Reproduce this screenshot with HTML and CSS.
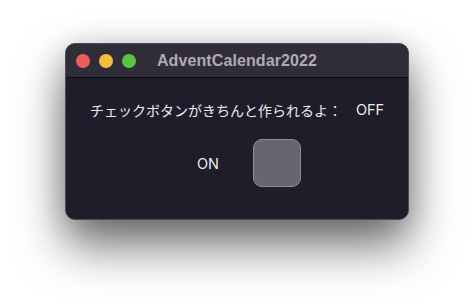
FILE: index.html
```html
<!DOCTYPE html>
<html lang="ja">
<head>
    <meta charset="UTF-8">
    <title>AdventCalendar2022</title>
    <link rel="stylesheet" href="styles.css">
</head>
<body>

    <!-- Window -->
    <div class="window">
        <div class="titlebar">
            <div class="lights">
                <span class="light red"></span>
                <span class="light yellow"></span>
                <span class="light green"></span>
            </div>
            <div class="title">AdventCalendar2022</div>
            <div></div>
        </div>

        <div class="content">
            <div class="status-row">
                <span class="label">チェックボタンがきちんと作られるよ：</span>
                <span class="state">OFF</span>
            </div>
            <div class="check-row">
                <span class="state">ON</span>
                <div class="check-button"></div>
            </div>
        </div>
    </div>

</body>
</html>
```

FILE: styles.css
```css
body {
    margin: 0;
    padding-top: 43px;
    background: #ffffff;
    font-family: "Inter", "Noto Sans CJK JP", sans-serif;
    height: 306px;
    box-sizing: border-box;
    overflow: hidden;
}

/* Window */
.window {
    width: 344px;
    height: 177px;
    margin: 0 auto;
    border-radius: 10px;
    background: #1f1d29;
    border: 1px solid #4e4c56;
    box-sizing: border-box;
    overflow: hidden;
    box-shadow: 0 26px 48px rgba(0, 0, 0, 0.55), 0 4px 30px rgba(0, 0, 0, 0.18);
}

.titlebar {
    height: 33px;
    background: #302d38;
    border-bottom: 1px solid #0d0c12;
    display: grid;
    grid-template-columns: 1fr auto 1fr;
    align-items: center;
}

.lights {
    display: flex;
    gap: 9px;
    padding-left: 10px;
}
.light {
    width: 14px;
    height: 14px;
    border-radius: 50%;
}
.red { background: #ec5f57; }
.yellow { background: #f5bd3e; }
.green { background: #5dc443; }

.title {
    color: #aeabb4;
    font-family: "Liberation Sans", sans-serif;
    font-weight: bold;
    font-size: 16px;
    letter-spacing: 0.1px;
}

/* Content */
.content {
    color: #ececef;
    font-size: 14px;
}

.status-row {
    display: flex;
    justify-content: center;
    gap: 14px;
    margin-top: 22px;
    line-height: 20px;
}
.label {
    font-family: "Noto Sans CJK JP", sans-serif;
}
.state {
    font-size: 14.5px;
}

.check-row {
    display: flex;
    justify-content: center;
    align-items: center;
    gap: 34px;
    padding-left: 24px;
    margin-top: 19px;
}

.check-button {
    width: 48px;
    height: 48px;
    border-radius: 9px;
    background: #67656e;
    border: 1.5px solid #8e8c95;
    box-sizing: border-box;
}
```
